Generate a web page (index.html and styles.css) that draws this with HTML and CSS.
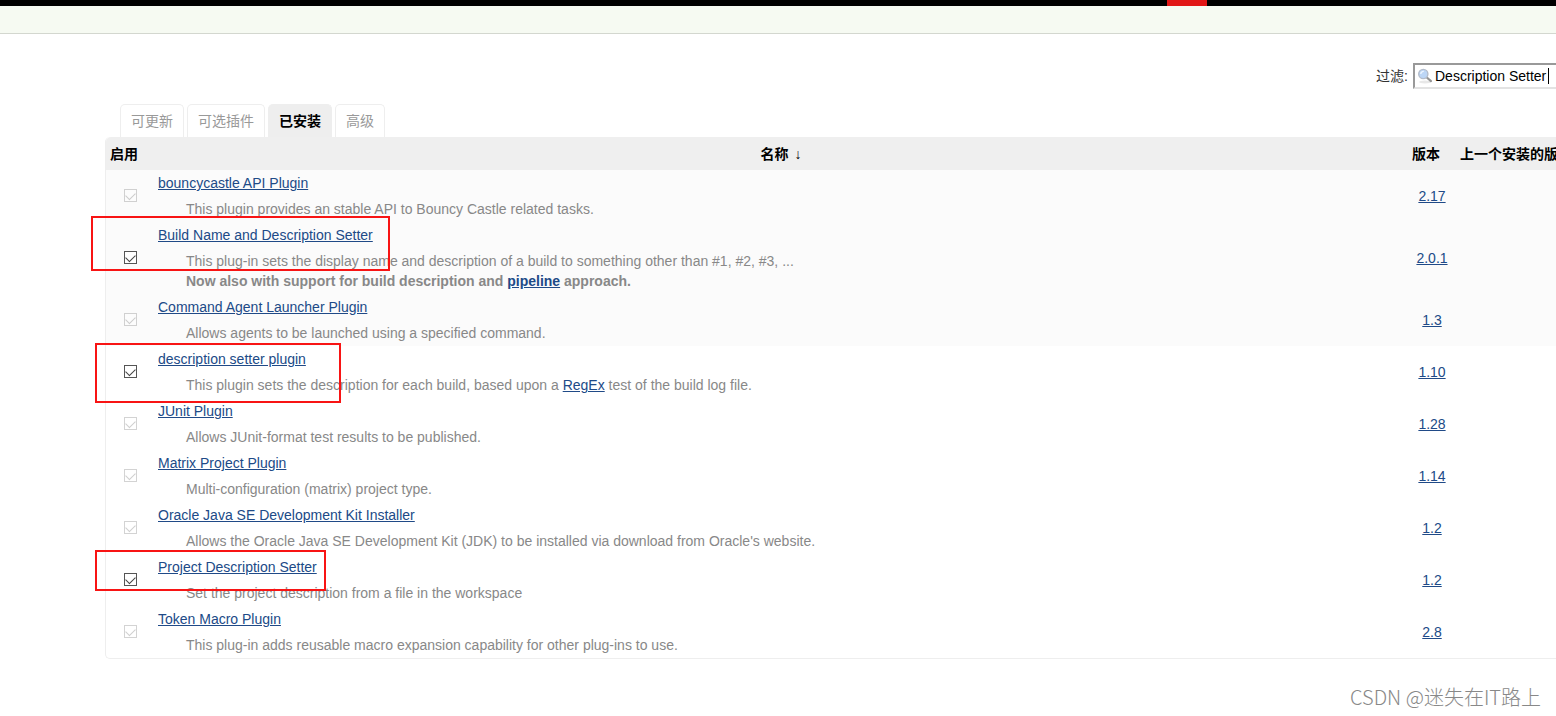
FILE: index.html
```html
<!DOCTYPE html>
<html lang="zh-CN">
<head>
<meta charset="utf-8">
<title>插件管理</title>
<link rel="stylesheet" href="styles.css">
</head>
<body>
<header class="topbar"><span class="alert"></span></header>
<div class="breadcrumb"></div>
<main class="content">
  <form class="filter">
    <label for="filter">过滤:</label>
    <span class="search">
      <svg class="search-icon" viewBox="0 0 16 16" aria-hidden="true">
        <ellipse cx="8" cy="14" rx="6" ry="1.5" fill="#e8e8e8"/>
        <path d="M9.8 9.5l4.2 3.6" stroke="#949494" stroke-width="2.2" stroke-linecap="round"/>
        <circle cx="6.3" cy="6" r="4.6" fill="#bcd6f6" stroke="#b3bccb" stroke-width="1.4"/>
        <path d="M3.8 6a2.7 2.7 0 0 1 3-2.6" fill="none" stroke="#edf5ff" stroke-width="1.4"/>
      </svg>
      <input id="filter" type="text" value="Description Setter">
      <span class="caret"></span>
    </span>
  </form>
  <nav class="tabs">
    <a class="tab" href="#updates">可更新</a>
    <a class="tab" href="#available">可选插件</a>
    <a class="tab active" href="#installed">已安装</a>
    <a class="tab" href="#advanced">高级</a>
  </nav>
  <table class="plugins">
    <colgroup><col class="col-on"><col><col class="col-version"><col class="col-previous"></colgroup>
    <thead>
      <tr><th class="left">启用</th><th>名称 <span class="arrow">↓</span></th><th class="left version-head">版本</th><th class="left">上一个安装的版本</th></tr>
    </thead>
    <tbody>
      <tr class="shaded">
        <td class="on"><input type="checkbox" aria-label="bouncycastle API Plugin" checked disabled></td>
        <td><a href="#p1">bouncycastle API Plugin</a><div class="excerpt">This plugin provides an stable API to Bouncy Castle related tasks.</div></td>
        <td class="version"><a href="#v1">2.17</a></td><td></td>
      </tr>
      <tr class="shaded">
        <td class="on"><input type="checkbox" aria-label="Build Name and Description Setter" checked></td>
        <td><a href="#p2">Build Name and Description Setter</a><div class="excerpt">This plug-in sets the display name and description of a build to something other than #1, #2, #3, ...<br><b>Now also with support for build description and <a href="#pipeline">pipeline</a> approach.</b></div></td>
        <td class="version"><a href="#v2">2.0.1</a></td><td></td>
      </tr>
      <tr class="shaded">
        <td class="on"><input type="checkbox" aria-label="Command Agent Launcher Plugin" checked disabled></td>
        <td><a href="#p3">Command Agent Launcher Plugin</a><div class="excerpt">Allows agents to be launched using a specified command.</div></td>
        <td class="version"><a href="#v3">1.3</a></td><td></td>
      </tr>
      <tr>
        <td class="on"><input type="checkbox" aria-label="description setter plugin" checked></td>
        <td><a href="#p4">description setter plugin</a><div class="excerpt">This plugin sets the description for each build, based upon a <a href="#regex">RegEx</a> test of the build log file.</div></td>
        <td class="version"><a href="#v4">1.10</a></td><td></td>
      </tr>
      <tr>
        <td class="on"><input type="checkbox" aria-label="JUnit Plugin" checked disabled></td>
        <td><a href="#p5">JUnit Plugin</a><div class="excerpt">Allows JUnit-format test results to be published.</div></td>
        <td class="version"><a href="#v5">1.28</a></td><td></td>
      </tr>
      <tr>
        <td class="on"><input type="checkbox" aria-label="Matrix Project Plugin" checked disabled></td>
        <td><a href="#p6">Matrix Project Plugin</a><div class="excerpt">Multi-configuration (matrix) project type.</div></td>
        <td class="version"><a href="#v6">1.14</a></td><td></td>
      </tr>
      <tr>
        <td class="on"><input type="checkbox" aria-label="Oracle Java SE Development Kit Installer" checked disabled></td>
        <td><a href="#p7">Oracle Java SE Development Kit Installer</a><div class="excerpt">Allows the Oracle Java SE Development Kit (JDK) to be installed via download from Oracle's website.</div></td>
        <td class="version"><a href="#v7">1.2</a></td><td></td>
      </tr>
      <tr>
        <td class="on"><input type="checkbox" aria-label="Project Description Setter" checked></td>
        <td><a href="#p8">Project Description Setter</a><div class="excerpt">Set the project description from a file in the workspace</div></td>
        <td class="version"><a href="#v8">1.2</a></td><td></td>
      </tr>
      <tr>
        <td class="on"><input type="checkbox" aria-label="Token Macro Plugin" checked disabled></td>
        <td><a href="#p9">Token Macro Plugin</a><div class="excerpt">This plug-in adds reusable macro expansion capability for other plug-ins to use.</div></td>
        <td class="version"><a href="#v9">2.8</a></td><td></td>
      </tr>
    </tbody>
  </table>
</main>
<div class="mark mark-build"></div>
<div class="mark mark-description"></div>
<div class="mark mark-project"></div>
<div class="watermark">CSDN @迷失在IT路上</div>
</body>
</html>
```
FILE: styles.css
```css
* { box-sizing: border-box; }
body {
  position: relative;
  min-height: 100vh;
  margin: 0;
  overflow: hidden;
  background: #fff;
  color: #333;
  font: 14px/20px "Liberation Sans", "Noto Sans CJK SC", sans-serif;
}
a { color: #204a87; text-decoration: underline; text-underline-offset: 1px; }
.topbar { display: flex; justify-content: flex-end; height: 6px; padding-right: 349px; background: #000; }
.alert { width: 40px; background: #e11616; }
.breadcrumb { height: 28px; background: #f6faf2; border-bottom: 1px solid #d3d7cf; }
.content { padding: 29px 0 0 105px; }

.filter { display: flex; justify-content: flex-end; align-items: center; gap: 5px; }
.search { position: relative; width: 143px; height: 26px; }
.search input {
  width: 100%;
  height: 100%;
  padding: 0 0 0 20px;
  border: 2px solid #e3e3e3;
  border-top-color: #999;
  border-left-color: #999;
  border-right: 0;
  border-radius: 0;
  outline: none;
  color: #000;
  font: inherit;
}
.search-icon { position: absolute; left: 4px; top: 5px; width: 16px; height: 16px; }
.caret { position: absolute; right: 7px; top: 5px; width: 1px; height: 16px; background: #000; }

.tabs { display: flex; gap: 3px; padding: 15px 0 0 15px; }
.tab {
  height: 33px;
  padding: 6px 10px;
  border: 1px solid #eee;
  border-bottom: 0;
  border-radius: 5px 5px 0 0;
  color: #999;
  text-decoration: none;
}
.tab.active { background: #eee; color: #000; font-weight: bold; }

.plugins {
  width: 100%;
  table-layout: fixed;
  border: 1px solid #eee;
  border-width: 0 0 1px 1px;
  border-radius: 5px 0 0 5px;
  border-collapse: separate;
  border-spacing: 0;
}
.col-on { width: 48px; }
.col-version { width: 48px; }
.col-previous { width: 100px; }
th { height: 33px; padding: 0 4px; background: #efefef; color: #000; white-space: nowrap; }
th:first-child { border-radius: 5px 0 0 0; }
.left { text-align: left; }
.version-head { padding: 0 4px; }
.arrow { margin-left: 2px; font-family: "Liberation Sans", sans-serif; font-weight: normal; }
td { padding: 3px 4px; }
.shaded { background: #fbfbfb; }
.excerpt { padding: 6px 0 0 28px; color: #888; }
.excerpt b { color: #888; }
.version { padding: 3px 0; text-align: center; }
.on { padding-bottom: 5px; }
.on input {
  appearance: none;
  display: flex;
  justify-content: center;
  width: 13px;
  height: 13px;
  margin: 0 0 0 14px;
  border: 1px solid #555;
  background: #fff;
}
.on input::after {
  content: "";
  width: 8px;
  height: 5px;
  margin-top: 2px;
  border: solid #444;
  border-width: 0 0 1px 1px;
  transform: rotate(-45deg);
}
.on input:disabled { opacity: .25; }

.mark { position: absolute; border: 2px solid #f81414; }
.mark-build { left: 91px; top: 216px; width: 299px; height: 55px; }
.mark-description { left: 95px; top: 343px; width: 246px; height: 60px; }
.mark-project { left: 95px; top: 550px; width: 231px; height: 41px; }
.watermark {
  position: absolute;
  right: 15px;
  bottom: 4px;
  color: #888;
  font: 300 20px/30px "Noto Sans CJK SC", sans-serif;
}
```
